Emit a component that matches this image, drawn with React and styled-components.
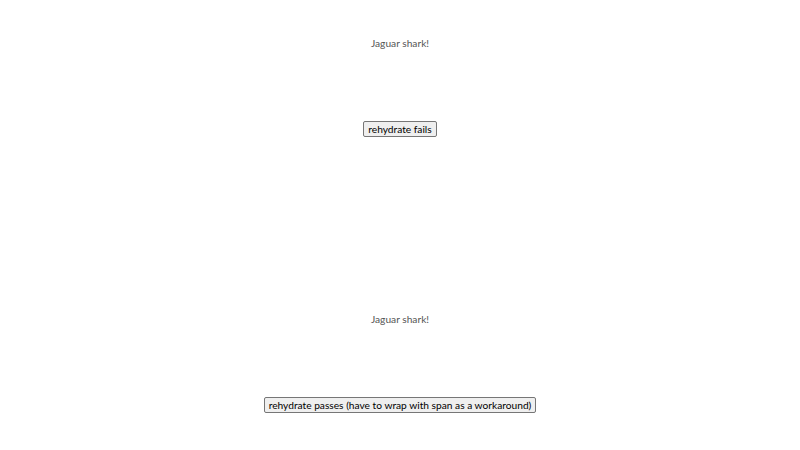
import React from "react";
import styled, { createGlobalStyle } from "styled-components";

const Global = createGlobalStyle`
  html, body { margin: 0; padding: 0; background: #fff; }
  body { font-family: Lato, "Noto Sans", sans-serif; }
`;

const Page = styled.main`
  display: flex;
  flex-direction: column;
  gap: 139px;
`;

const Section = styled.section`
  padding-top: 36px;
  display: flex;
  flex-direction: column;
  align-items: center;
`;

const Caption = styled.div`
  font-size: 10.2px;
  line-height: 14px;
  color: #555;
`;

const Button = styled.button`
  margin-top: 71px;
  font-family: Lato, "Noto Sans", sans-serif;
  font-size: 10.2px;
  line-height: 14px;
  color: #000;
  background: #efefef;
  border: 1px solid #767676;
  border-radius: 2px;
  padding: 0 4px;
  cursor: pointer;
`;

export default function App() {
  return (
    <>
      <Global />
      <Page>
        <Section>
          <Caption>Jaguar shark!</Caption>
          <Button>rehydrate fails</Button>
        </Section>
        <Section>
          <Caption>Jaguar shark!</Caption>
          <Button>rehydrate passes (have to wrap with span as a workaround)</Button>
        </Section>
      </Page>
    </>
  );
}
